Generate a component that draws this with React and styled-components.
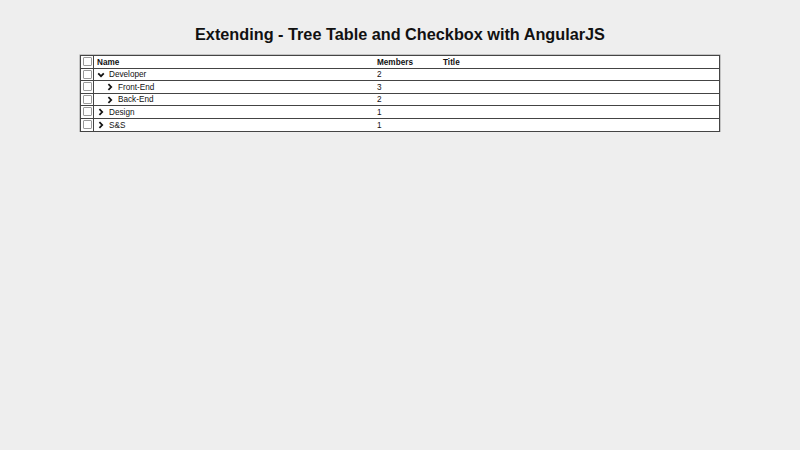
import styled, { createGlobalStyle } from "styled-components"

const Global = createGlobalStyle`
  body {
    margin: 0;
    background: #eeeeee;
    font-family: "Liberation Sans", Arial, sans-serif;
    color: #111;
  }
  * { box-sizing: border-box; }
`

const Page = styled.div`
  width: 800px;
  padding-top: 22px;
`

const Heading = styled.h1`
  margin: 0 0 9px 0;
  font-size: 16.25px;
  line-height: 24px;
  font-weight: 700;
  text-align: center;
`

const Table = styled.div`
  width: 640px;
  margin: 0 auto;
  background: #fff;
  border: 1px solid #444;
  box-shadow: 0 0 0 0.5px #999;
`

const Row = styled.div`
  display: grid;
  grid-template-columns: 13px 280px 66px 1fr;
  height: 12.5px;
  border-bottom: 1px solid #444;
  font-size: 8.2px;
  font-weight: ${p => (p.head ? 700 : 400)};
  &:last-child {
    border-bottom: none;
  }
`

const CheckCell = styled.div`
  display: flex;
  align-items: center;
  justify-content: center;
  border-right: 1px solid #444;
`

const Box = styled.span`
  width: 9px;
  height: 9px;
  border: 1px solid #9a9a9a;
  border-radius: 1px;
  background: #fff;
`

const Cell = styled.div`
  display: flex;
  align-items: center;
  padding-top: 1px;
  padding-left: ${p => p.pad || 3}px;
  white-space: nowrap;
`

const Chevron = styled.svg`
  width: 8px;
  height: 8px;
  margin-right: 4px;
  flex-shrink: 0;
`

const Arrow = ({ open }) => (
  <Chevron viewBox="0 0 10 10">
    <path
      d={open ? "M1.5 3 L5 6.5 L8.5 3" : "M3 1.5 L6.5 5 L3 8.5"}
      fill="none"
      stroke="#111"
      strokeWidth="2.2"
    />
  </Chevron>
)

const rows = [
  { name: "Developer", members: 2, level: 0, open: true },
  { name: "Front-End", members: 3, level: 1 },
  { name: "Back-End", members: 2, level: 1 },
  { name: "Design", members: 1, level: 0 },
  { name: "S&S", members: 1, level: 0 },
]

export default function App() {
  return (
    <Page>
      <Global />
      <Heading>Extending - Tree Table and Checkbox with AngularJS</Heading>
      <Table>
        <Row head>
          <CheckCell><Box /></CheckCell>
          <Cell>Name</Cell>
          <Cell>Members</Cell>
          <Cell>Title</Cell>
        </Row>
        {rows.map(r => (
          <Row key={r.name}>
            <CheckCell><Box /></CheckCell>
            <Cell pad={3 + r.level * 9}>
              <Arrow open={r.open} />
              {r.name}
            </Cell>
            <Cell>{r.members}</Cell>
            <Cell />
          </Row>
        ))}
      </Table>
    </Page>
  )
}
